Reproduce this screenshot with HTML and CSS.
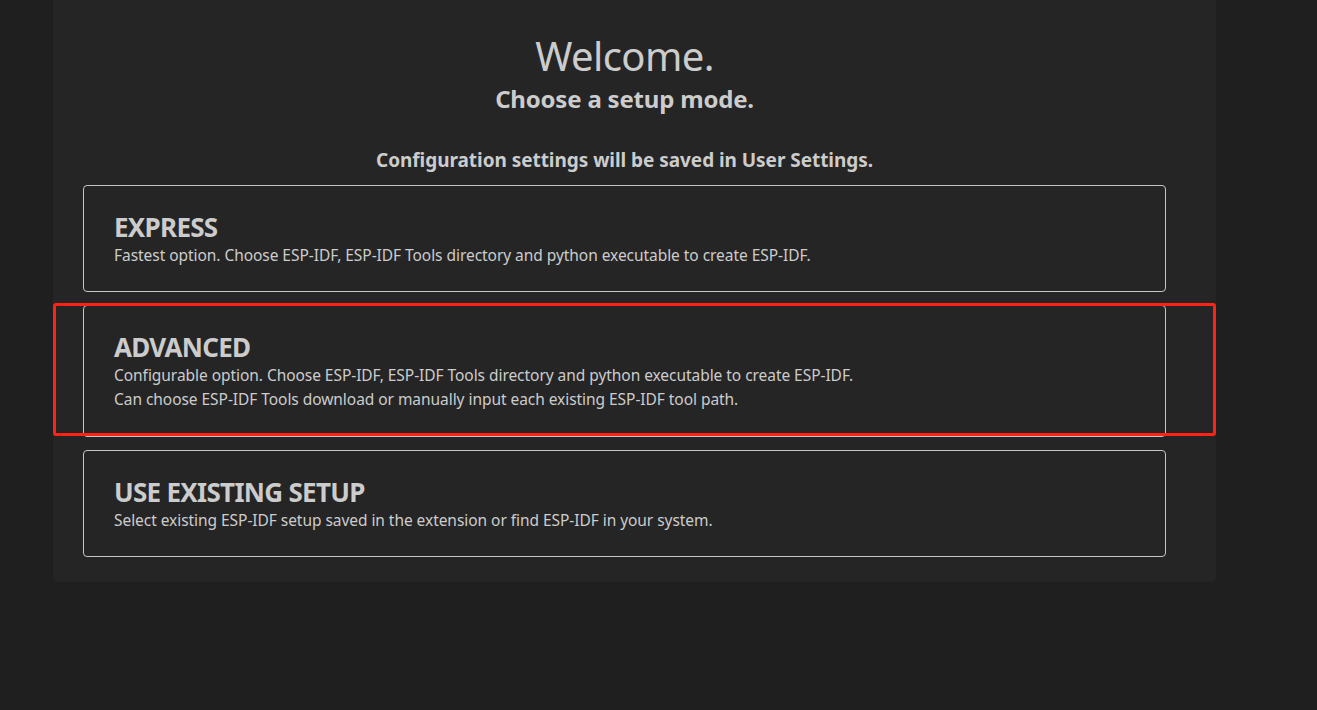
FILE: index.html
```html
<!DOCTYPE html>
<html lang="en">
<head>
<meta charset="utf-8">
<title>ESP-IDF Setup</title>
<link rel="stylesheet" href="styles.css">
</head>
<body>
<main class="panel">
  <h1 class="welcome">Welcome.</h1>
  <h2 class="subtitle">Choose a setup mode.</h2>
  <p class="notice">Configuration settings will be saved in User Settings.</p>
  <div class="cards">
    <section class="card">
      <h3 class="card-title">EXPRESS</h3>
      <p class="card-text">Fastest option. Choose ESP-IDF, ESP-IDF Tools directory and python executable to create ESP-IDF.</p>
    </section>
    <section class="card card-highlight">
      <h3 class="card-title">ADVANCED</h3>
      <p class="card-text">Configurable option. Choose ESP-IDF, ESP-IDF Tools directory and python executable to create ESP-IDF.</p>
      <p class="card-text">Can choose ESP-IDF Tools download or manually input each existing ESP-IDF tool path.</p>
      <span class="highlight-box"></span>
    </section>
    <section class="card">
      <h3 class="card-title">USE EXISTING SETUP</h3>
      <p class="card-text">Select existing ESP-IDF setup saved in the extension or find ESP-IDF in your system.</p>
    </section>
  </div>
</main>
</body>
</html>
```

FILE: styles.css
```css
html, body {
  margin: 0;
  padding: 0;
  background: #1f1f1f;
  height: 100%;
}

body {
  font-family: "Noto Sans", "Open Sans", sans-serif;
  color: #cccccc;
}

.panel {
  margin-left: 53px;
  width: 1163px;
  box-sizing: border-box;
  padding: 32px 50px 25px 30px;
  background: #252526;
  border-radius: 0 0 4px 4px;
  display: flex;
  flex-direction: column;
}

.welcome {
  margin: 0;
  text-align: center;
  font-size: 40px;
  line-height: 48px;
  font-weight: 400;
  letter-spacing: -0.6px;
}

.subtitle {
  margin: 5px 0 0;
  text-align: center;
  font-size: 24px;
  line-height: 28px;
  font-weight: 700;
  letter-spacing: -0.2px;
}

.notice {
  margin: 35px 0 13px;
  text-align: center;
  font-size: 19px;
  line-height: 24px;
  font-weight: 700;
  letter-spacing: -0.05px;
}

.cards {
  display: flex;
  flex-direction: column;
  gap: 13px;
}

.card {
  position: relative;
  border: 1px solid #c5c5c5;
  border-radius: 4px;
  padding: 25px 30px 24px 30px;
}

.card-highlight {
  padding-bottom: 25px;
}

.card-title {
  margin: 0;
  font-size: 26px;
  line-height: 32px;
  font-weight: 700;
  letter-spacing: -0.7px;
}

.card-text {
  margin: 0;
  font-size: 15.5px;
  line-height: 24px;
  letter-spacing: -0.05px;
}

.highlight-box {
  position: absolute;
  left: -31px;
  right: -51px;
  top: -3px;
  bottom: 0;
  border: 3px solid #ff2317;
  border-radius: 3px;
  pointer-events: none;
}
```
